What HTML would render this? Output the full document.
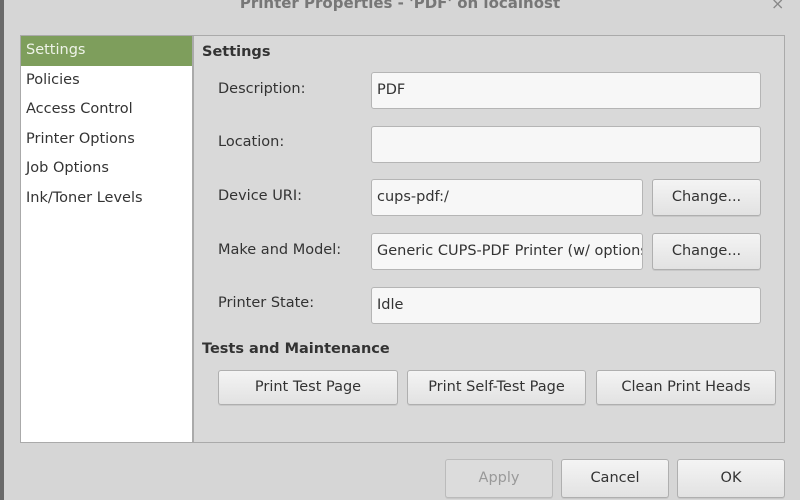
<!DOCTYPE html>
<html><head><style>
*{box-sizing:border-box;margin:0;padding:0}
body{width:800px;height:500px;background:#d6d6d6;font-family:"DejaVu Sans","Liberation Sans",sans-serif;font-size:14.5px;color:#333;position:relative;overflow:hidden}
.a{position:absolute}
.title{left:0;width:800px;top:-6px;text-align:center;font-weight:bold;color:#777;font-size:15px}
.side{left:20px;top:35px;width:173px;height:408px;background:#fff;border:1px solid #aaa}
.side div{height:29.5px;line-height:29px;padding-left:5px;font-size:14.5px;color:#333}
.side .sel{background:#7e9e5c;color:#eef3e8}
.panel{left:193px;top:35px;width:592px;height:408px;background:#d9d9d9;border:1px solid #aaa}
.h{font-weight:bold;font-size:14.5px;color:#333}
.lbl{font-size:14.5px}
.ent{background:#f7f7f7;border:1px solid #b5b5b5;border-radius:3px;height:37px;line-height:35px;padding-left:5px;font-size:14.5px;overflow:hidden;white-space:nowrap}
.btn{background:linear-gradient(#f4f4f4,#e2e2e2);border:1px solid #afafaf;border-radius:3px;text-align:center;font-size:14.5px;color:#333;box-shadow:0 1px 0 #c8c8c8}
</style></head><body>
<div class="a" style="left:0;top:0;width:4px;height:500px;background:#6a6a6a"></div>
<div class="a title">Printer Properties - 'PDF' on localhost</div>
<div class="a" style="left:771px;top:-6px;color:#888;font-size:16px">×</div>
<div class="a side">
<div class="sel">Settings</div><div>Policies</div><div>Access Control</div><div>Printer Options</div><div>Job Options</div><div>Ink/Toner Levels</div>
</div>
<div class="a panel"></div>
<div class="a h" style="left:202px;top:44px">Settings</div>
<div class="a lbl" style="left:218px;top:81px">Description:</div>
<div class="a lbl" style="left:218px;top:134px">Location:</div>
<div class="a lbl" style="left:218px;top:188px">Device URI:</div>
<div class="a lbl" style="left:218px;top:242px">Make and Model:</div>
<div class="a lbl" style="left:218px;top:295px">Printer State:</div>
<div class="a ent" style="left:371px;top:72px;width:390px">PDF</div>
<div class="a ent" style="left:371px;top:126px;width:390px"></div>
<div class="a ent" style="left:371px;top:179px;width:272px">cups-pdf:/</div>
<div class="a ent" style="left:371px;top:233px;width:272px">Generic CUPS-PDF Printer (w/ options)</div>
<div class="a ent" style="left:371px;top:287px;width:390px">Idle</div>
<div class="a btn" style="left:652px;top:179px;width:109px;height:37px;line-height:35px">Change...</div>
<div class="a btn" style="left:652px;top:233px;width:109px;height:37px;line-height:35px">Change...</div>
<div class="a h" style="left:202px;top:341px">Tests and Maintenance</div>
<div class="a btn" style="left:218px;top:370px;width:180px;height:35px;line-height:33px">Print Test Page</div>
<div class="a btn" style="left:407px;top:370px;width:179px;height:35px;line-height:33px">Print Self-Test Page</div>
<div class="a btn" style="left:596px;top:370px;width:180px;height:35px;line-height:33px">Clean Print Heads</div>
<div class="a btn" style="left:445px;top:459px;width:108px;height:39px;line-height:37px;color:#999;background:#dcdcdc;border-color:#bbb">Apply</div>
<div class="a btn" style="left:561px;top:459px;width:108px;height:39px;line-height:37px">Cancel</div>
<div class="a btn" style="left:677px;top:459px;width:108px;height:39px;line-height:37px">OK</div>
</body></html>
